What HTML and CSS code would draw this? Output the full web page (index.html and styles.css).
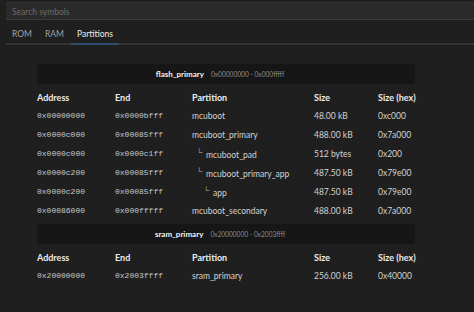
FILE: index.html
```html
<!DOCTYPE html>
<html lang="en">

<head>
    <meta charset="UTF-8">
    <meta name="viewport" content="width=device-width, initial-scale=1.0">
    <title>Memory Partitions</title>
    <link rel="stylesheet" href="styles.css">
</head>

<body>
    <input type="text" class="search" placeholder="Search symbols">
    <div class="tabs">
        <div class="tab">ROM</div>
        <div class="tab">RAM</div>
        <div class="tab active">Partitions</div>
    </div>
    <div class="content">
        <!-- flash -->
        <div class="band"><b>flash_primary</b><span class="range">0x00000000 - 0x000fffff</span></div>
        <div class="row head">
            <div>Address</div><div>End</div><div>Partition</div><div>Size</div><div>Size (hex)</div>
        </div>
        <div class="row">
            <div class="mono">0x00000000</div><div class="mono">0x0000bfff</div>
            <div>mcuboot</div><div>48.00 kB</div><div>0xc000</div>
        </div>
        <div class="row">
            <div class="mono">0x0000c000</div><div class="mono">0x00085fff</div>
            <div>mcuboot_primary</div><div>488.00 kB</div><div>0x7a000</div>
        </div>
        <div class="row">
            <div class="mono">0x0000c000</div><div class="mono">0x0000c1ff</div>
            <div class="d1"><span class="tree">└</span>mcuboot_pad</div><div>512 bytes</div><div>0x200</div>
        </div>
        <div class="row">
            <div class="mono">0x0000c200</div><div class="mono">0x00085fff</div>
            <div class="d1"><span class="tree">└</span>mcuboot_primary_app</div><div>487.50 kB</div><div>0x79e00</div>
        </div>
        <div class="row">
            <div class="mono">0x0000c200</div><div class="mono">0x00085fff</div>
            <div class="d2"><span class="tree">└</span>app</div><div>487.50 kB</div><div>0x79e00</div>
        </div>
        <div class="row">
            <div class="mono">0x00086000</div><div class="mono">0x000fffff</div>
            <div>mcuboot_secondary</div><div>488.00 kB</div><div>0x7a000</div>
        </div>
        <!-- sram -->
        <div class="band gap"><b>sram_primary</b><span class="range">0x20000000 - 0x2003ffff</span></div>
        <div class="row head">
            <div>Address</div><div>End</div><div>Partition</div><div>Size</div><div>Size (hex)</div>
        </div>
        <div class="row">
            <div class="mono">0x20000000</div><div class="mono">0x2003ffff</div>
            <div>sram_primary</div><div>256.00 kB</div><div>0x40000</div>
        </div>
    </div>
</body>

</html>
```

FILE: styles.css
```css
* {
    margin: 0;
    padding: 0;
    box-sizing: border-box;
}

body {
    background-color: #1f1f1f;
    color: #d2d2d2;
    font-family: 'Lato', 'Noto Sans', sans-serif;
    font-size: 8.5px;
    padding-top: 2px;
}

.search {
    display: block;
    width: calc(100% - 6px);
    height: 18px;
    margin-left: 6px;
    background-color: #2a2a2a;
    border: none;
    border-top: 1px solid #333333;
    border-bottom: 1px solid #3c3c3c;
    color: #cccccc;
    font-family: inherit;
    font-size: 8.5px;
    padding: 1px 0 0 6px;
    outline: none;
}

.search::placeholder {
    color: #6b6b6b;
}

.tabs {
    display: flex;
    margin-left: 6px;
    height: 25px;
    border-bottom: 2px solid #333333;
}

.tab {
    padding: 5px 6px 0;
    margin-right: 1px;
    line-height: 18px;
    color: #a0a0a0;
    font-size: 8.5px;
}

.tab.active {
    color: #ececec;
    border-bottom: 2px solid #2b4d6e;
    margin-bottom: -2px;
}

.content {
    margin-left: 37px;
    width: 378px;
    padding-top: 19px;
}

.band {
    height: 20px;
    background-color: #161616;
    display: flex;
    justify-content: center;
    align-items: center;
    gap: 7px;
    padding-right: 12px;
}

.band.gap {
    margin-top: 4px;
}

.band b {
    color: #f4f4f4;
    font-size: 8px;
}

.range {
    color: #8c8c8c;
    font-size: 6.6px;
}

.row {
    display: grid;
    grid-template-columns: 78px 77px 122px 64px 37px;
    height: 19px;
    align-items: center;
    white-space: nowrap;
}

.row.head {
    height: 22px;
    padding-top: 4px;
    font-weight: bold;
    color: #ececec;
    font-size: 9px;
}

.mono {
    font-family: 'Liberation Mono', monospace;
    font-size: 8px;
    color: #c8c8c8;
}

.tree {
    display: inline-block;
    font-size: 8px;
    vertical-align: 3px;
    width: 10px;
    color: #c0c0c0;
}

.d1 {
    padding-left: 4px;
}

.d2 {
    padding-left: 11px;
}
```
